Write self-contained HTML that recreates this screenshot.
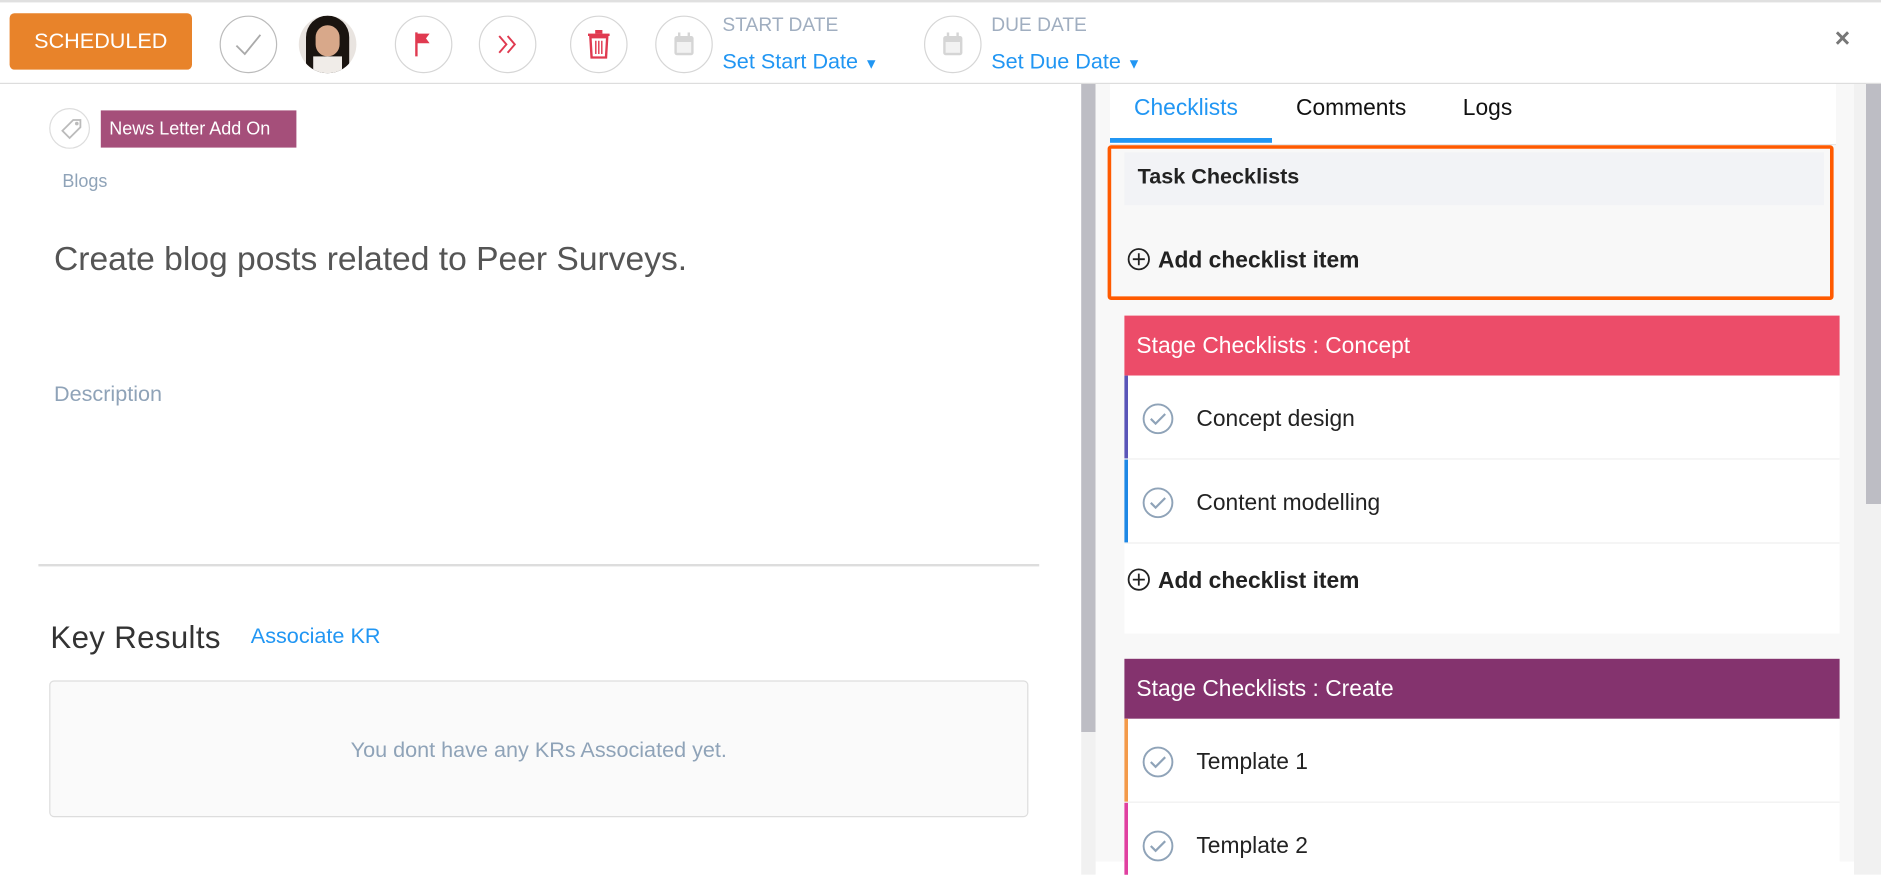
<!DOCTYPE html>
<html><head><meta charset="utf-8"><style>
html,body{margin:0;padding:0;width:1881px;height:875px;overflow:hidden;background:#fff;font-family:"Liberation Sans",sans-serif}
#w{position:absolute;left:0;top:0;width:1568px;height:729px;transform:scale(1.2);transform-origin:0 0;overflow:hidden}
.a{position:absolute}
.circ{position:absolute;width:48px;height:48px;border:1px solid #d6d6d6;border-radius:50%;box-sizing:border-box;display:flex;align-items:center;justify-content:center}
.lbl{color:#a0aec0;font-size:16px}
.blue{color:#2196f3}
.item{position:absolute;left:937px;width:596px;height:70px;background:#fff;border-bottom:1px solid #eee;box-sizing:border-box}
.item .bar{position:absolute;left:0;top:0;width:3px;height:100%}
.item svg{position:absolute;left:15px;top:23px}
.item span{position:absolute;left:60px;top:26px;font-size:19px;color:#222}
.add{position:absolute;font-size:19px;font-weight:bold;color:#222}
.add svg{vertical-align:-3px;margin-right:6px}
.hd{position:absolute;left:937px;width:596px;height:50px;color:#fff;font-size:19px;line-height:52px;padding-left:10px;box-sizing:border-box}
</style></head><body><div id="w">
<div class="a" style="left:0;top:0;width:1568px;height:70px;background:#fff;border-bottom:1px solid #ddd;box-sizing:border-box"></div>
<div class="a" style="left:0;top:0;width:1568px;height:2px;background:#e0e0e0"></div>
<div class="a" style="left:8px;top:11px;width:152px;height:47px;background:#e8832a;border-radius:4px;color:#fff;font-size:18px;line-height:47px;text-align:center">SCHEDULED</div>
<div class="circ" style="left:183px;top:13px;border-color:#bbb"><svg width="24" height="20"><path d="M2 11 L9 18 L22 2" stroke="#aaa" stroke-width="1.5" fill="none"/></svg></div>
<div class="a" style="left:249px;top:13px;width:48px;height:48px;border-radius:50%;background:#e9e4e0;overflow:hidden"><div class="a" style="left:6px;top:0;width:36px;height:48px;background:#1a1410;border-radius:18px 18px 0 0"></div><div class="a" style="left:14px;top:8px;width:20px;height:26px;background:#d8a88a;border-radius:10px"></div><div class="a" style="left:12px;top:34px;width:24px;height:14px;background:#f0ece8"></div></div>
<div class="circ" style="left:329px;top:13px"><svg width="20" height="22"><path d="M4 1 V21" stroke="#e03a50" stroke-width="2"/><path d="M4 2 H15 L12 6 L15 10 H4Z" fill="#e03a50"/></svg></div>
<div class="circ" style="left:399px;top:13px"><svg width="20" height="20"><path d="M3 3 L9 10 L3 17 M10 3 L16 10 L10 17" stroke="#e03a50" stroke-width="1.6" fill="none"/></svg></div>
<div class="circ" style="left:475px;top:13px"><svg width="20" height="24"><rect x="1" y="3" width="18" height="2" fill="#e03a50"/><rect x="7" y="0" width="6" height="3" fill="#e03a50"/><path d="M3 6 H17 L16 23 H4Z" fill="none" stroke="#e03a50" stroke-width="2"/><path d="M7.5 9 V20 M10 9 V20 M12.5 9 V20" stroke="#e03a50" stroke-width="1.2"/></svg></div>
<div class="circ" style="left:546px;top:13px"><svg width="18" height="20"><rect x="1" y="3" width="16" height="16" rx="2" fill="#d5d5d5"/><rect x="3" y="8" width="12" height="9" fill="#f2f2f2"/><rect x="4" y="0" width="2" height="5" fill="#d5d5d5"/><rect x="12" y="0" width="2" height="5" fill="#d5d5d5"/></svg></div>
<div class="a lbl" style="left:602px;top:13px">START DATE</div>
<div class="a blue" style="left:602px;top:41px;font-size:18px">Set Start Date <span style="font-size:12px">▼</span></div>
<div class="circ" style="left:770px;top:13px"><svg width="18" height="20"><rect x="1" y="3" width="16" height="16" rx="2" fill="#d5d5d5"/><rect x="3" y="8" width="12" height="9" fill="#f2f2f2"/><rect x="4" y="0" width="2" height="5" fill="#d5d5d5"/><rect x="12" y="0" width="2" height="5" fill="#d5d5d5"/></svg></div>
<div class="a lbl" style="left:826px;top:13px">DUE DATE</div>
<div class="a blue" style="left:826px;top:41px;font-size:18px">Set Due Date <span style="font-size:12px">▼</span></div>
<div class="a" style="left:1529px;top:19px;font-size:22px;font-weight:bold;color:#777">×</div>
<div class="a" style="left:41px;top:90px;width:34px;height:34px;border:1px solid #ddd;border-radius:50%;box-sizing:border-box"><svg width="34" height="34"><path d="M10 18 L19 9 H25 V15 L16 24Z" fill="none" stroke="#bbb" stroke-width="1.5"/><circle cx="22" cy="12" r="1.5" fill="#bbb"/></svg></div>
<div class="a" style="left:84px;top:92px;width:163px;height:31px;background:#a54f7a;color:#fff;font-size:15px;line-height:31px;padding-left:7px;box-sizing:border-box">News Letter Add On</div>
<div class="a" style="left:52px;top:143px;font-size:15px;color:#8fa3b8">Blogs</div>
<div class="a" style="left:45px;top:200px;font-size:28px;color:#555;font-weight:300">Create blog posts related to Peer Surveys.</div>
<div class="a" style="left:45px;top:318px;font-size:18px;color:#8fa3b8">Description</div>
<div class="a" style="left:32px;top:470px;width:834px;height:2px;background:#ddd"></div>
<div class="a" style="left:42px;top:516px;font-size:26px;color:#333;letter-spacing:0.3px">Key Results</div>
<div class="a blue" style="left:209px;top:520px;font-size:18px">Associate KR</div>
<div class="a" style="left:41px;top:567px;width:816px;height:114px;background:#fafafa;border:1px solid #ddd;border-radius:4px;box-sizing:border-box;text-align:center;line-height:114px;font-size:18px;color:#8fa3b8">You dont have any KRs Associated yet.</div>
<div class="a" style="left:901px;top:70px;width:12px;height:540px;background:#bdbdc4"></div>
<div class="a" style="left:901px;top:610px;width:12px;height:119px;background:#f1f1f1"></div>
<div class="a" style="left:1545px;top:70px;width:23px;height:659px;background:#f1f1f1"></div>
<div class="a" style="left:1555px;top:70px;width:13px;height:350px;background:#bdbdc4"></div>
<div class="a" style="left:913px;top:70px;width:632px;height:648px;background:#f8f8f8"></div>
<div class="a" style="left:925px;top:70px;width:605px;height:51px;background:#fff;border-bottom:1px solid #e6e6e6;box-sizing:border-box"></div>
<div class="a blue" style="left:945px;top:80px;font-size:19px;font-weight:500">Checklists</div>
<div class="a" style="left:1080px;top:80px;font-size:19px;color:#111">Comments</div>
<div class="a" style="left:1219px;top:80px;font-size:19px;color:#111">Logs</div>
<div class="a" style="left:925px;top:115px;width:135px;height:4px;background:#2196f3"></div>
<div class="a" style="left:923px;top:121px;width:605px;height:129px;border:3px solid #ff5a00;border-radius:3px;box-sizing:border-box;background:#f8f8f8"></div>
<div class="a" style="left:937px;top:127px;width:583px;height:44px;background:#f2f3f6;font-size:18px;font-weight:bold;color:#222;line-height:40px;padding-left:11px;box-sizing:border-box">Task Checklists</div>
<div class="add" style="left:939px;top:206px"><svg width="20" height="20"><circle cx="10" cy="10" r="8.5" fill="none" stroke="#222" stroke-width="1.5"/><path d="M10 5 V15 M5 10 H15" stroke="#222" stroke-width="1.5"/></svg>Add checklist item</div>
<div class="a" style="left:937px;top:263px;width:596px;height:265px;background:#fff"></div>
<div class="hd" style="top:263px;background:#ec4c69">Stage Checklists : Concept</div>
<div class="item" style="top:313px"><div class="bar" style="background:#5a55b8"></div><svg width="26" height="26"><circle cx="13" cy="13" r="12" fill="none" stroke="#8fa3b8" stroke-width="1.6"/><path d="M7 13 L11 17 L19 9" stroke="#8fa3b8" stroke-width="1.8" fill="none"/></svg><span>Concept design</span></div>
<div class="item" style="top:383px"><div class="bar" style="background:#1e88e5"></div><svg width="26" height="26"><circle cx="13" cy="13" r="12" fill="none" stroke="#8fa3b8" stroke-width="1.6"/><path d="M7 13 L11 17 L19 9" stroke="#8fa3b8" stroke-width="1.8" fill="none"/></svg><span>Content modelling</span></div>
<div class="add" style="left:939px;top:473px"><svg width="20" height="20"><circle cx="10" cy="10" r="8.5" fill="none" stroke="#222" stroke-width="1.5"/><path d="M10 5 V15 M5 10 H15" stroke="#222" stroke-width="1.5"/></svg>Add checklist item</div>
<div class="hd" style="top:549px;background:#84336e">Stage Checklists : Create</div>
<div class="item" style="top:599px"><div class="bar" style="background:#f39a4a"></div><svg width="26" height="26"><circle cx="13" cy="13" r="12" fill="none" stroke="#8fa3b8" stroke-width="1.6"/><path d="M7 13 L11 17 L19 9" stroke="#8fa3b8" stroke-width="1.8" fill="none"/></svg><span>Template 1</span></div>
<div class="item" style="top:669px"><div class="bar" style="background:#e040a0"></div><svg width="26" height="26"><circle cx="13" cy="13" r="12" fill="none" stroke="#8fa3b8" stroke-width="1.6"/><path d="M7 13 L11 17 L19 9" stroke="#8fa3b8" stroke-width="1.8" fill="none"/></svg><span>Template 2</span></div>
</div></body></html>
